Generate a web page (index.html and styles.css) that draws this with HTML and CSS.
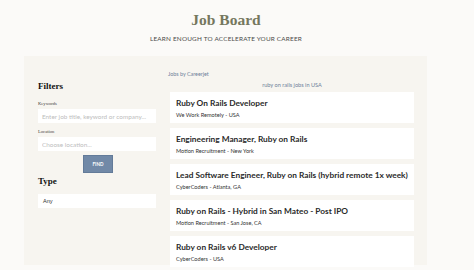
FILE: index.html
```html
<!DOCTYPE html>
<html lang="en">
<head>
  <meta charset="UTF-8" />
  <title>Job Board</title>
  <link rel="stylesheet" href="styles.css">
</head>
<body>
  <header class="site-header">
    <h1>Job Board</h1>
    <p class="tagline">Learn Enough to Accelerate Your Career</p>
  </header>

  <div class="board">
    <aside class="filters">
      <h2>Filters</h2>
      <label for="keywords">Keywords</label>
      <input type="text" id="keywords" placeholder="Enter job title, keyword or company..." />
      <label for="location">Location</label>
      <input type="text" id="location" placeholder="Choose location..." />
      <button class="find-btn">FIND</button>

      <h2 class="type-title">Type</h2>
      <div class="select-box">Any</div>
    </aside>

    <main class="results">
      <a class="powered" href="#">Jobs by Careerjet</a>
      <p class="search-title">ruby on rails jobs in USA</p>

      <div class="job-card">
        <h3>Ruby On Rails Developer</h3>
        <p>We Work Remotely - USA</p>
      </div>
      <div class="job-card">
        <h3>Engineering Manager, Ruby on Rails</h3>
        <p>Motion Recruitment - New York</p>
      </div>
      <div class="job-card">
        <h3>Lead Software Engineer, Ruby on Rails (hybrid remote 1x week)</h3>
        <p>CyberCoders - Atlanta, GA</p>
      </div>
      <div class="job-card">
        <h3>Ruby on Rails - Hybrid in San Mateo - Post IPO</h3>
        <p>Motion Recruitment - San Jose, CA</p>
      </div>
      <div class="job-card">
        <h3>Ruby on Rails v6 Developer</h3>
        <p>CyberCoders - USA</p>
      </div>
    </main>
  </div>
</body>
</html>
```

FILE: styles.css
```css
body {
  margin: 0;
  padding: 0;
  background: #fbfaf8;
  font-family: 'Lato', sans-serif;
  color: #333;
  height: 270px;
  overflow: hidden;
}

/* Page header, centred over the panel rather than the window */
.site-header {
  text-align: center;
  padding: 10px 22px 0 0;
  height: 46px;
}
.site-header h1 {
  margin: 0;
  font-family: 'Liberation Serif', serif;
  font-weight: bold;
  font-size: 15.5px;
  line-height: 20px;
  color: #75775e;
}
.tagline {
  margin: 4px 0 0;
  font-family: 'Lato', sans-serif;
  font-size: 6.4px;
  line-height: 10px;
  text-transform: uppercase;
  letter-spacing: 0.2px;
  color: #4a4a4a;
}

/* Main panel */
.board {
  margin-left: 24px;
  width: 403px;
  height: 209px;
  background: #f7f5f0;
  display: grid;
  grid-template-columns: 136px 1fr;
}

/* Sidebar */
.filters {
  padding: 24px 4px 0 14px;
  display: flex;
  flex-direction: column;
}
.filters h2 {
  margin: 0;
  font-family: 'Liberation Serif', serif;
  font-size: 9px;
  line-height: 12px;
  font-weight: bold;
  color: #111;
}
.filters label {
  font-family: 'Liberation Serif', serif;
  font-size: 4.6px;
  color: #444;
  margin-top: 9px;
  line-height: 6px;
}
.filters label + input {
  margin-top: 2px;
}
.filters label[for="location"] {
  margin-top: 6px;
}
.filters input {
  box-sizing: border-box;
  width: 118px;
  height: 14px;
  border: none;
  background: #fff;
  padding: 0 4px;
  font-family: 'Lato', sans-serif;
  font-size: 6.4px;
  color: #333;
  outline: none;
}
.filters input::placeholder {
  color: #bdbdbd;
}
.find-btn {
  align-self: center;
  margin: 4px 0 0 2px;
  width: 30px;
  height: 18px;
  border: 1px solid #637b99;
  background: #7189a7;
  color: #fff;
  font-family: 'Lato', sans-serif;
  font-size: 4.6px;
  font-weight: bold;
  padding: 0;
}
.filters .type-title {
  margin-top: 2px;
}
.select-box {
  margin-top: 7px;
  width: 118px;
  height: 14px;
  box-sizing: border-box;
  background: #fff;
  padding: 0 5px;
  font-family: 'Liberation Sans', sans-serif;
  font-size: 5.6px;
  line-height: 14px;
  color: #333;
}

/* Results column */
.results {
  padding: 14px 13px 0 10px;
  display: flex;
  flex-direction: column;
}
.powered {
  font-size: 5.4px;
  line-height: 8px;
  color: #6d7f99;
  text-decoration: none;
  margin-left: -2px;
}
.search-title {
  margin: 3px 0 3px;
  text-align: center;
  font-size: 5.6px;
  line-height: 8px;
  color: #6d7f99;
}
.job-card {
  background: #fff;
  height: 31px;
  box-sizing: border-box;
  padding: 6px 6px 0;
  margin-bottom: 5px;
}
.job-card h3 {
  margin: 0;
  font-size: 8.3px;
  line-height: 10px;
  font-weight: bold;
  color: #2a2a2a;
  white-space: nowrap;
}
.job-card p {
  margin: 3px 0 0;
  font-size: 5.6px;
  line-height: 7px;
  color: #333;
}
```
